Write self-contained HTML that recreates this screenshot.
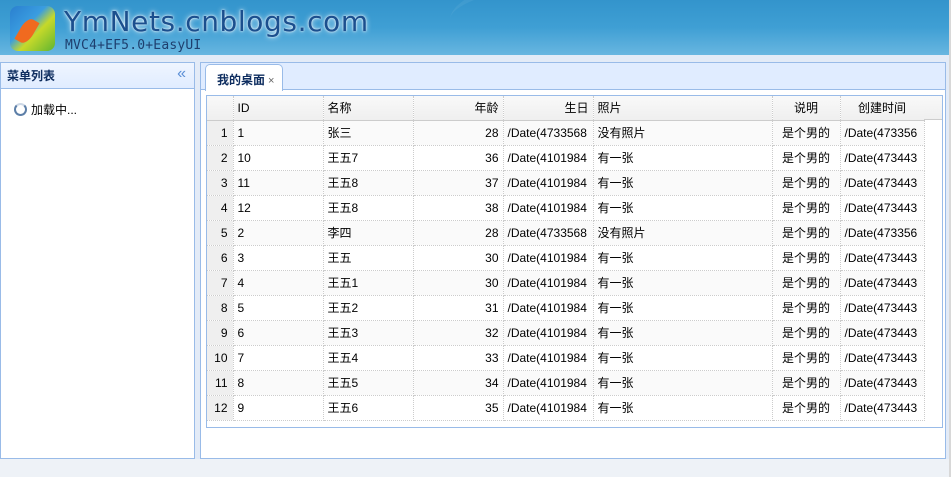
<!DOCTYPE html>
<html><head><meta charset="utf-8"><style>
*{margin:0;padding:0;box-sizing:border-box}
body{width:951px;height:477px;overflow:hidden;background:#eef2f7;font-family:"Liberation Sans","Noto Sans CJK SC",sans-serif;font-size:12px;color:#000;position:relative}
#hd{position:absolute;left:0;top:0;width:949px;height:55px;background:linear-gradient(180deg,#3394cc 0%,#3f9fd4 50%,#68b6e0 100%);overflow:hidden}
#hd .sw{position:absolute;left:450px;top:-60px;width:900px;height:160px;border-radius:50%;border-top:18px solid rgba(255,255,255,.06)}
#edge{position:absolute;left:949px;top:0;width:2px;height:477px;background:#d8d8d8}
#logo{position:absolute;left:10px;top:6px;width:45px;height:45px;border-radius:8px;background:linear-gradient(135deg,#2a7fcf 0%,#3a9de0 40%,#c6d92a 60%,#5fb531 100%)}
#logo:after{content:"";position:absolute;left:10px;top:12px;width:14px;height:26px;background:#f06a1f;border-radius:50% 0 50% 0;transform:rotate(30deg)}
#t1{position:absolute;left:64px;top:5px;font-family:"DejaVu Sans",sans-serif;font-size:28px;color:#1b4f8e;text-shadow:0 0 6px rgba(255,255,255,.9),0 0 2px #fff;letter-spacing:.6px}
#t2{position:absolute;left:65px;top:38px;font-family:"DejaVu Sans Mono",monospace;font-size:13px;color:#1e3f6e;letter-spacing:.2px}
.bg{position:absolute;left:0;top:55px;width:949px;height:404px;background:#e3ebf7}
#lp{position:absolute;left:0;top:62px;width:195px;height:397px;border:1px solid #99bbe8;background:#fff}
#lp .ph{height:26px;background:linear-gradient(#eff5ff,#e0ecff);border-bottom:1px solid #99bbe8;font-weight:bold;padding:4px 6px;color:#0e2d5f}
#lp .col{position:absolute;right:8px;top:2px;color:#5b8fd6;font-size:16px;font-weight:normal}
#load{position:absolute;left:13px;top:38px;display:flex;align-items:center;gap:4px;font-size:12px}
#load i{display:inline-block;width:13px;height:13px;border:2px solid #5d7fa8;border-top-color:#cdd8e6;border-radius:50%}
#rp{position:absolute;left:200px;top:62px;width:746px;height:397px;border:1px solid #99bbe8;background:#fff}
#tabs{height:27px;background:#e0ecff;border-bottom:1px solid #99bbe8;position:relative}
#tab{position:absolute;left:4px;top:1px;width:78px;height:27px;background:#fff;border:1px solid #99bbe8;border-bottom:none;border-radius:5px 5px 0 0;font-weight:bold;padding:6px 0 0 11px;color:#0e2d5f}
#tab span{font-weight:normal;color:#666;font-size:11px;margin-left:3px}
#grid{position:absolute;left:5px;top:32px;width:737px;height:333px;border:1px solid #99bbe8;overflow:hidden}
table{border-collapse:collapse;table-layout:fixed;width:717px}
td,th{height:25px;border-right:1px dotted #ccc;border-bottom:1px dotted #ccc;padding:0 4px;white-space:nowrap;overflow:hidden;font-weight:normal;font-size:12px;line-height:14px}
tr{height:25px}
tr.h,tr.h th{height:24px}
th{background:linear-gradient(#f9f9f9,#efefef);border-bottom:1px solid #ccc;text-align:left}
td.rn{background:#efefef;text-align:right;padding-right:5px}
th.rn{background:linear-gradient(#f9f9f9,#efefef)}
tr:nth-child(even) td{background:#fafafa}
tr:nth-child(even) td.rn{background:#efefef}
.r{text-align:right}.c{text-align:center}
.sb{position:absolute;left:717px;top:0;width:20px;height:24px;background:linear-gradient(#f9f9f9,#efefef);border-bottom:1px solid #ccc}
</style></head><body>
<div id="hd"><div class="sw"></div><div id="logo"></div><div id="t1">YmNets.cnblogs.com</div><div id="t2">MVC4+EF5.0+EasyUI</div></div>
<div id="edge"></div>
<div class="bg"></div>
<div id="lp"><div class="ph">菜单列表<span class="col">«</span></div><div id="load"><i></i>加载中...</div></div>
<div id="rp"><div id="tabs"><div id="tab">我的桌面<span>×</span></div></div>
<div id="grid"><div class="sb"></div><table>
<colgroup><col style="width:26px"><col style="width:90px"><col style="width:90px"><col style="width:90px"><col style="width:90px"><col style="width:179px"><col style="width:68px"><col style="width:84px"></colgroup>
<tr class="h"><th class="rn"></th><th>ID</th><th>名称</th><th class="r">年龄</th><th class="r">生日</th><th>照片</th><th class="c">说明</th><th class="c">创建时间</th></tr>
<tr><td class="rn">1</td><td>1</td><td>张三</td><td class="r">28</td><td>/Date(4733568</td><td>没有照片</td><td class="c">是个男的</td><td>/Date(473356</td></tr>
<tr><td class="rn">2</td><td>10</td><td>王五7</td><td class="r">36</td><td>/Date(4101984</td><td>有一张</td><td class="c">是个男的</td><td>/Date(473443</td></tr>
<tr><td class="rn">3</td><td>11</td><td>王五8</td><td class="r">37</td><td>/Date(4101984</td><td>有一张</td><td class="c">是个男的</td><td>/Date(473443</td></tr>
<tr><td class="rn">4</td><td>12</td><td>王五8</td><td class="r">38</td><td>/Date(4101984</td><td>有一张</td><td class="c">是个男的</td><td>/Date(473443</td></tr>
<tr><td class="rn">5</td><td>2</td><td>李四</td><td class="r">28</td><td>/Date(4733568</td><td>没有照片</td><td class="c">是个男的</td><td>/Date(473356</td></tr>
<tr><td class="rn">6</td><td>3</td><td>王五</td><td class="r">30</td><td>/Date(4101984</td><td>有一张</td><td class="c">是个男的</td><td>/Date(473443</td></tr>
<tr><td class="rn">7</td><td>4</td><td>王五1</td><td class="r">30</td><td>/Date(4101984</td><td>有一张</td><td class="c">是个男的</td><td>/Date(473443</td></tr>
<tr><td class="rn">8</td><td>5</td><td>王五2</td><td class="r">31</td><td>/Date(4101984</td><td>有一张</td><td class="c">是个男的</td><td>/Date(473443</td></tr>
<tr><td class="rn">9</td><td>6</td><td>王五3</td><td class="r">32</td><td>/Date(4101984</td><td>有一张</td><td class="c">是个男的</td><td>/Date(473443</td></tr>
<tr><td class="rn">10</td><td>7</td><td>王五4</td><td class="r">33</td><td>/Date(4101984</td><td>有一张</td><td class="c">是个男的</td><td>/Date(473443</td></tr>
<tr><td class="rn">11</td><td>8</td><td>王五5</td><td class="r">34</td><td>/Date(4101984</td><td>有一张</td><td class="c">是个男的</td><td>/Date(473443</td></tr>
<tr><td class="rn">12</td><td>9</td><td>王五6</td><td class="r">35</td><td>/Date(4101984</td><td>有一张</td><td class="c">是个男的</td><td>/Date(473443</td></tr>
</table></div></div>
</body></html>
